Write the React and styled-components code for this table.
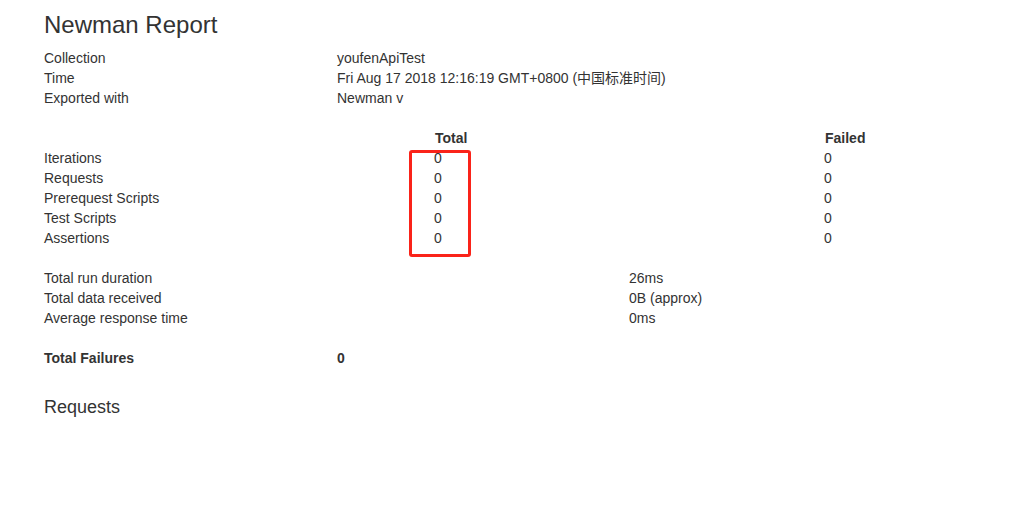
import React from "react";
import styled, { createGlobalStyle } from "styled-components";

const GlobalStyle = createGlobalStyle`
  body {
    margin: 0;
    background: #fff;
    color: #333;
    font-family: "Liberation Sans", Arial, "Noto Sans CJK SC", sans-serif;
    font-size: 14px;
    line-height: 20px;
    overflow: hidden;
  }
`;

const Page = styled.div`
  padding: 12px 0 40px 44px;
`;

const Title = styled.h1`
  font-size: 24px;
  line-height: 26px;
  font-weight: 400;
  margin: 0 0 10px;
`;

const InfoGrid = styled.div`
  display: grid;
  grid-template-columns: 293px 1fr;
  margin-bottom: 20px;
  font-weight: ${(p) => (p.bold ? 700 : 400)};
`;

const StatsTable = styled.div`
  display: flex;
  margin-bottom: 20px;
`;

const Column = styled.div`
  display: flex;
  flex-direction: column;
  width: ${(p) => p.width || "auto"};
  position: relative;
`;

const Head = styled.div`
  font-weight: 700;
  height: 20px;
  padding-left: 1px;
`;

const Highlight = styled.div`
  position: absolute;
  left: -25px;
  top: 22px;
  width: 62px;
  height: 107px;
  box-sizing: border-box;
  border: 3px solid #fa2319;
  border-radius: 3px;
  pointer-events: none;
`;

const SummaryGrid = styled.div`
  display: grid;
  grid-template-columns: 585px 1fr;
  margin-bottom: 20px;
`;

const SectionTitle = styled.h2`
  font-size: 18px;
  line-height: 20px;
  font-weight: 400;
  margin: 29px 0 0;
`;

const info = [
  ["Collection", "youfenApiTest"],
  ["Time", "Fri Aug 17 2018 12:16:19 GMT+0800 (中国标准时间)"],
  ["Exported with", "Newman v"],
];

const stats = [
  ["Iterations", 0, 0],
  ["Requests", 0, 0],
  ["Prerequest Scripts", 0, 0],
  ["Test Scripts", 0, 0],
  ["Assertions", 0, 0],
];

const summary = [
  ["Total run duration", "26ms"],
  ["Total data received", "0B (approx)"],
  ["Average response time", "0ms"],
];

export default function App() {
  return (
    <>
      <GlobalStyle />
      <Page>
        <Title>Newman Report</Title>
        <InfoGrid>
          {info.map(([k, v]) => (
            <React.Fragment key={k}>
              <div>{k}</div>
              <div>{v}</div>
            </React.Fragment>
          ))}
        </InfoGrid>
        <StatsTable>
          <Column width="390px">
            <Head />
            {stats.map((s) => (
              <div key={s[0]}>{s[0]}</div>
            ))}
          </Column>
          <Column width="390px">
            <Head>Total</Head>
            {stats.map((s) => (
              <div key={s[0]}>{s[1]}</div>
            ))}
            <Highlight />
          </Column>
          <Column>
            <Head>Failed</Head>
            {stats.map((s) => (
              <div key={s[0]}>{s[2]}</div>
            ))}
          </Column>
        </StatsTable>
        <SummaryGrid>
          {summary.map(([k, v]) => (
            <React.Fragment key={k}>
              <div>{k}</div>
              <div>{v}</div>
            </React.Fragment>
          ))}
        </SummaryGrid>
        <InfoGrid bold>
          <div>Total Failures</div>
          <div>0</div>
        </InfoGrid>
        <SectionTitle>Requests</SectionTitle>
      </Page>
    </>
  );
}
